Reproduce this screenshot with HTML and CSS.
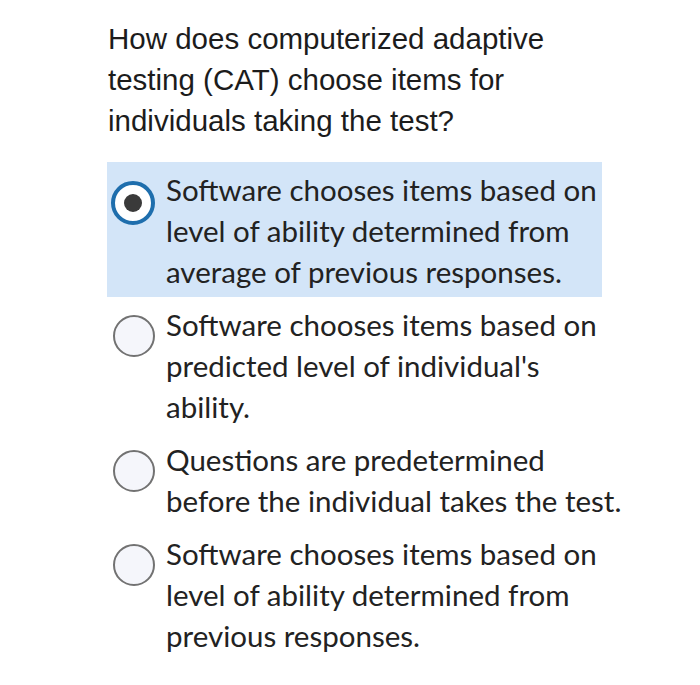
FILE: index.html
```html
<!DOCTYPE html>
<html>
<head>
<meta charset="utf-8">
<link rel="stylesheet" href="styles.css">
</head>
<body>
<div class="quiz">
  <p class="question">How does computerized adaptive testing (CAT) choose items for individuals taking the test?</p>
  <div class="options">
    <label class="option selected">
      <span class="radio"><span class="dot"></span></span>
      <span class="text">Software chooses items based on level of ability determined from average of previous responses.</span>
    </label>
    <label class="option">
      <span class="radio"></span>
      <span class="text">Software chooses items based on predicted level of individual's ability.</span>
    </label>
    <label class="option">
      <span class="radio"></span>
      <span class="text">Questions are predetermined before the individual takes the test.</span>
    </label>
    <label class="option">
      <span class="radio"></span>
      <span class="text">Software chooses items based on level of ability determined from previous responses.</span>
    </label>
  </div>
</div>
</body>
</html>
```
FILE: styles.css
```css
html, body {
  margin: 0;
  padding: 0;
  background: #ffffff;
}
.quiz {
  padding: 18px 0 0 107px;
  width: 495px;
}
.question {
  margin: 0 0 21px 0;
  padding-left: 1px;
  font-family: "Liberation Sans", Arial, sans-serif;
  font-size: 29.5px;
  line-height: 41px;
  color: #1c1c1c;
  width: 460px;
}
.options {
  display: flex;
  flex-direction: column;
}
.option {
  display: flex;
  align-items: flex-start;
  padding: 7px 0 5px 0;
}
.option.selected {
  background: #d3e5f8;
}
.radio {
  flex: none;
  box-sizing: border-box;
  width: 42px;
  height: 42px;
  margin: 11px 11px 0 6px;
  border-radius: 50%;
  border: 2px solid #727272;
  background: #f5f6fb;
  display: flex;
  align-items: center;
  justify-content: center;
}
.option.selected .radio {
  border: 4px solid #1e6ead;
  background: #ffffff;
  width: 44px;
  height: 44px;
  margin: 12px 11px 0 4px;
}
.dot {
  width: 18px;
  height: 18px;
  border-radius: 50%;
  background: #3a3a3a;
}
.text {
  flex: none;
  font-family: Lato, "Liberation Sans", sans-serif;
  font-size: 29.5px;
  line-height: 41px;
  color: #222222;
  width: 462px;
}
```
